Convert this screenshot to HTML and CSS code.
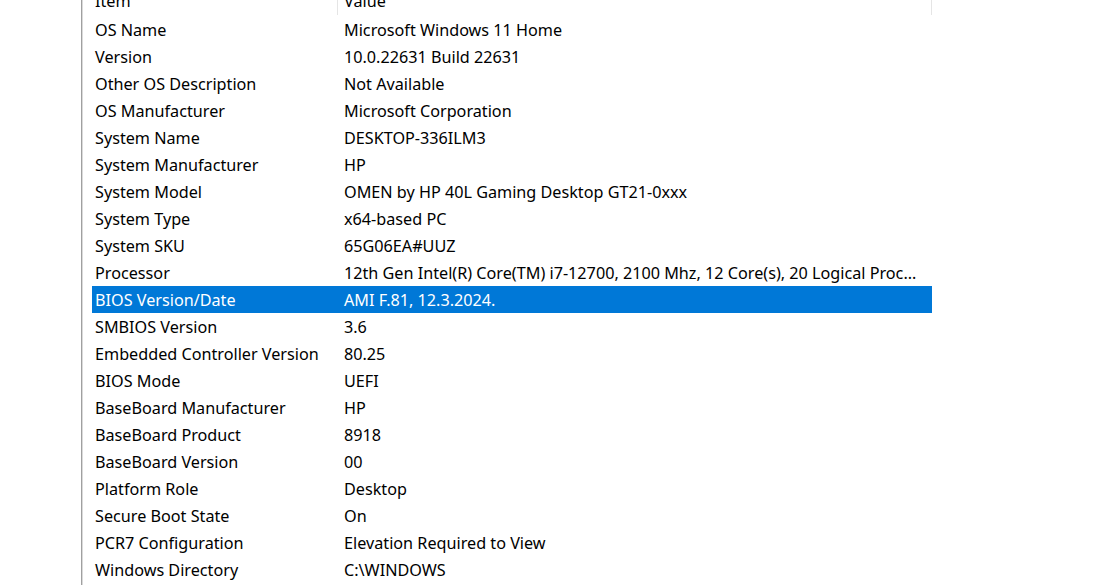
FILE: index.html
```html
<!DOCTYPE html>
<html lang="en">
<head>
    <meta charset="UTF-8">
    <title>System Information</title>
    <link rel="stylesheet" href="styles.css">
</head>
<body>
    <div class="pane">
        <div class="list">
            <div class="row header">
                <div class="cell item">Item</div>
                <div class="cell value">Value</div>
            </div>
            <div class="row"><div class="cell item">OS Name</div><div class="cell value">Microsoft Windows 11 Home</div></div>
            <div class="row"><div class="cell item">Version</div><div class="cell value">10.0.22631 Build 22631</div></div>
            <div class="row"><div class="cell item">Other OS Description</div><div class="cell value">Not Available</div></div>
            <div class="row"><div class="cell item">OS Manufacturer</div><div class="cell value">Microsoft Corporation</div></div>
            <div class="row"><div class="cell item">System Name</div><div class="cell value">DESKTOP-336ILM3</div></div>
            <div class="row"><div class="cell item">System Manufacturer</div><div class="cell value">HP</div></div>
            <div class="row"><div class="cell item">System Model</div><div class="cell value">OMEN by HP 40L Gaming Desktop GT21-0xxx</div></div>
            <div class="row"><div class="cell item">System Type</div><div class="cell value">x64-based PC</div></div>
            <div class="row"><div class="cell item">System SKU</div><div class="cell value">65G06EA#UUZ</div></div>
            <div class="row"><div class="cell item">Processor</div><div class="cell value">12th Gen Intel(R) Core(TM) i7-12700, 2100 Mhz, 12 Core(s), 20 Logical Processor(s)</div></div>
            <div class="row selected"><div class="cell item">BIOS Version/Date</div><div class="cell value">AMI F.81, 12.3.2024.</div></div>
            <div class="row"><div class="cell item">SMBIOS Version</div><div class="cell value">3.6</div></div>
            <div class="row"><div class="cell item">Embedded Controller Version</div><div class="cell value">80.25</div></div>
            <div class="row"><div class="cell item">BIOS Mode</div><div class="cell value">UEFI</div></div>
            <div class="row"><div class="cell item">BaseBoard Manufacturer</div><div class="cell value">HP</div></div>
            <div class="row"><div class="cell item">BaseBoard Product</div><div class="cell value">8918</div></div>
            <div class="row"><div class="cell item">BaseBoard Version</div><div class="cell value">00</div></div>
            <div class="row"><div class="cell item">Platform Role</div><div class="cell value">Desktop</div></div>
            <div class="row"><div class="cell item">Secure Boot State</div><div class="cell value">On</div></div>
            <div class="row"><div class="cell item">PCR7 Configuration</div><div class="cell value">Elevation Required to View</div></div>
            <div class="row"><div class="cell item">Windows Directory</div><div class="cell value">C:\WINDOWS</div></div>
        </div>
    </div>
</body>
</html>
```

FILE: styles.css
```css
/* Page */
body {
    margin: 0;
    background-color: #fff;
    color: #000;
    font-family: "Noto Sans", "Open Sans", sans-serif;
    font-size: 16.2px;
    overflow: hidden;
    height: 585px;
}

/* Right-hand pane with its splitter edge */
.pane {
    display: flow-root;
    margin-left: 81px;
    height: 100%;
    border-left: 1px solid #a0a0a0;
    box-shadow: inset 1px 0 0 #dadada;
    padding-left: 10px;
}

.list {
    width: 840px;
    margin-top: -11px;
}

.row {
    display: grid;
    grid-template-columns: 246px 594px;
    height: 27px;
}

.cell {
    padding-top: 2px;
    line-height: 25px;
    white-space: nowrap;
    overflow: hidden;
    text-overflow: ellipsis;
}

.item {
    padding-left: 3px;
}

.value {
    padding-left: 6px;
    padding-right: 7px;
}

/* Column header */
.header .cell {
    padding-top: 0;
    line-height: 24px;
    border-right: 1px solid #e5e5e5;
    margin-bottom: 1px;
}

.selected {
    background-color: #0078d7;
    color: #fff;
}
```
